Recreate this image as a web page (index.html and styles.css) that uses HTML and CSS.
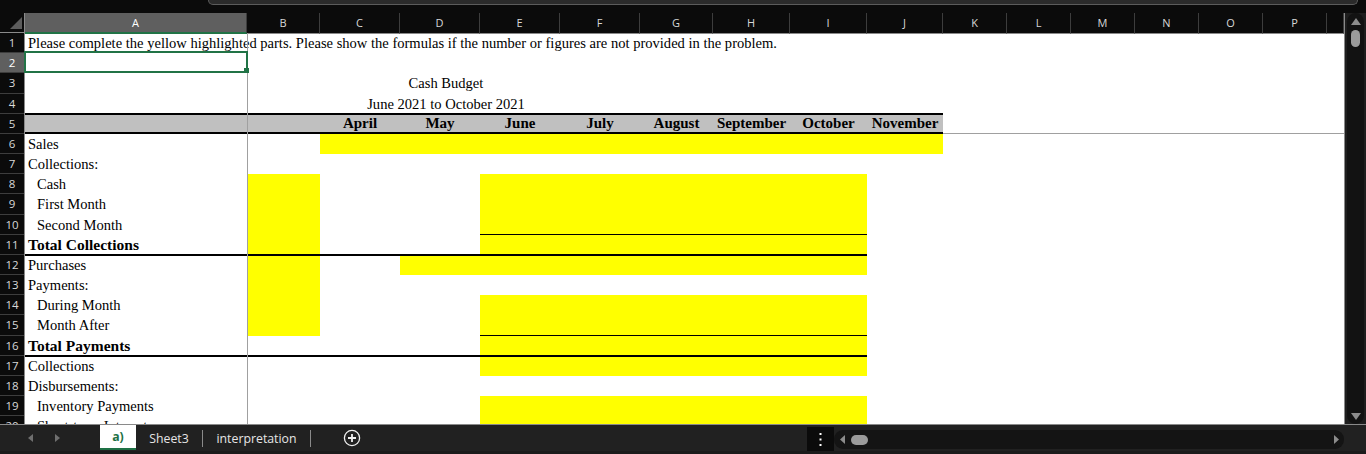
FILE: index.html
```html
<!DOCTYPE html>
<html lang="en">
<head>
  <meta charset="UTF-8" />
  <title>Cash Budget - a)</title>
  <link rel="stylesheet" href="styles.css">
</head>
<body>

  <!-- formula bar edge -->
  <div class="topbar"><div class="formula-edge"></div></div>

  <div class="workarea">
    <div class="sheet">

      <!-- select all corner -->
      <div class="corner">
        <svg width="24" height="19" viewBox="0 0 24 19"><polygon points="22,4 22,16 10,16" fill="#5c5c5c"/></svg>
      </div>

      <!-- column headers -->
      <div class="colheads">
        <span class="on">A</span><span>B</span><span>C</span><span>D</span><span>E</span>
        <span>F</span><span>G</span><span>H</span><span>I</span><span>J</span>
        <span>K</span><span>L</span><span>M</span><span>N</span><span>O</span>
        <span>P</span><span></span>
      </div>

      <!-- row headers -->
      <div class="rowheads">
        <span>1</span><span class="on">2</span><span>3</span><span>4</span><span>5</span>
        <span>6</span><span>7</span><span>8</span><span>9</span><span>10</span>
        <span>11</span><span>12</span><span>13</span><span>14</span><span>15</span>
        <span>16</span><span>17</span><span>18</span><span>19</span><span>20</span>
      </div>

      <!-- cells -->
      <div class="cells">
        <div class="txt note">Please complete the yellow highlighted parts. Please show the formulas if the number or figures are not provided in the problem.</div>
        <div class="sel"></div>

        <div class="txt title r3">Cash Budget</div>
        <div class="txt title r4">June 2021 to October 2021</div>

        <div class="txt band">
          <span></span><span>April</span><span>May</span><span>June</span><span>July</span>
          <span>August</span><span>September</span><span>October</span><span>November</span>
        </div>
        <div class="freeze-h"></div>

        <!-- yellow input areas -->
        <div class="fill fill-sales"></div>
        <div class="fill fill-b"></div>
        <div class="fill fill-coll"></div>
        <div class="fill fill-purch"></div>
        <div class="fill fill-pay"></div>
        <div class="fill fill-inv"></div>

        <!-- total lines -->
        <div class="rule part r10"></div>
        <div class="rule thick r11"></div>
        <div class="rule part r15"></div>
        <div class="rule thick r16"></div>

        <!-- labels -->
        <div class="txt lbl r6">Sales</div>
        <div class="txt lbl r7">Collections:</div>
        <div class="txt lbl ind r8">Cash</div>
        <div class="txt lbl ind r9">First Month</div>
        <div class="txt lbl ind r10">Second Month</div>
        <div class="txt lbl bold r11">Total Collections</div>
        <div class="txt lbl r12">Purchases</div>
        <div class="txt lbl r13">Payments:</div>
        <div class="txt lbl ind r14">During Month</div>
        <div class="txt lbl ind r15">Month After</div>
        <div class="txt lbl bold r16">Total Payments</div>
        <div class="txt lbl r17">Collections</div>
        <div class="txt lbl r18">Disbursements:</div>
        <div class="txt lbl ind r19">Inventory Payments</div>
        <div class="txt lbl ind r20">Short-term Interest</div>

        <div class="freeze-v"></div>
      </div>
    </div>

    <!-- vertical scrollbar -->
    <div class="vscroll">
      <div class="vtrack">
        <svg width="10" height="7" viewBox="0 0 10 7"><polygon points="5,0 10,7 0,7" fill="#8c8c8c"/></svg>
        <div class="vthumb"></div>
        <svg class="down" width="10" height="7" viewBox="0 0 10 7"><polygon points="0,0 10,0 5,7" fill="#8c8c8c"/></svg>
      </div>
    </div>
  </div>

  <!-- sheet tabs -->
  <div class="tabbar">
    <div class="nav">
      <svg width="5" height="8" viewBox="0 0 5 8"><polygon points="5,0 5,8 0,4" fill="#6f6f6f"/></svg>
      <svg width="5" height="8" viewBox="0 0 5 8"><polygon points="0,0 0,8 5,4" fill="#6f6f6f"/></svg>
    </div>
    <div class="tab active">a)</div>
    <div class="tab sheet3">Sheet3</div>
    <div class="divider"></div>
    <div class="tab interp">interpretation</div>
    <div class="divider"></div>
    <div class="addsheet">
      <svg width="18" height="18" viewBox="0 0 18 18">
        <circle cx="9" cy="9" r="7.6" fill="none" stroke="#f0f0f0" stroke-width="1.3"/>
        <path d="M9 5v8M5 9h8" stroke="#f0f0f0" stroke-width="1.8"/>
      </svg>
    </div>
    <div class="spacer"></div>
    <div class="more">
      <svg width="3" height="13" viewBox="0 0 3 13"><rect x="0.5" y="0" width="2" height="2" fill="#fff"/><rect x="0.5" y="5.5" width="2" height="2" fill="#fff"/><rect x="0.5" y="11" width="2" height="2" fill="#fff"/></svg>
    </div>
    <div class="hscroll">
      <div class="htrack">
        <svg width="5" height="9" viewBox="0 0 5 9"><polygon points="5,0 5,9 0,4.5" fill="#8c8c8c"/></svg>
        <div class="hthumb"></div>
        <svg class="right" width="5" height="9" viewBox="0 0 5 9"><polygon points="0,0 0,9 5,4.5" fill="#8c8c8c"/></svg>
      </div>
    </div>
    <div class="corner-br"></div>
  </div>

</body>
</html>
```

FILE: styles.css
```css
* {
  margin: 0; padding: 0;
  box-sizing: border-box;
}
body {
  background-color: #1e1e1e;
  width: 1366px;
  height: 454px;
  overflow: hidden;
  font-family: "Open Sans", "Noto Sans", sans-serif;
}

/* top strip */
.topbar {
  height: 13px;
  background-color: #0b0b0b;
}
.formula-edge {
  margin-left: 208px;
  width: 1150px;
  height: 5px;
  background-color: #2b2b2b;
  border: 1px solid #5c5c5c;
  border-top: none;
  border-radius: 0 0 6px 6px;
}

.workarea {
  display: flex;
  height: 411px;
}
.sheet {
  width: 1345px;
  display: grid;
  grid-template-columns: 25px 1fr;
  grid-template-rows: 20px 1fr;
  overflow: hidden;
  background-color: #fff;
  border-right: 1px solid #8a8a8a;
}
.corner {
  background-color: #0b0b0b;
  border-right: 1px solid #8a8a8a;
  border-bottom: 1px solid #8a8a8a;
}
.corner svg { display: block; }

/* headers */
.colheads, .cells {
  display: grid;
  grid-template-columns: 222px 73px 80px 80px 80px 80px 73px 77px 77px 76px 64px 64px 64px 64px 64px 64px 1fr;
}
.colheads {
  background-color: #0b0b0b;
}
.colheads span {
  color: #d8d8d8;
  font-size: 11px;
  text-align: center;
  line-height: 19px;
  border-right: 1px solid #3d3d3d;
  border-bottom: 1px solid #8a8a8a;
}
.colheads .on {
  background-color: #5f5f5f;
  color: #fff;
  border-bottom: 2px solid #217346;
}
.rowheads, .cells {
  grid-template-rows: 20px 20px 21px 20px 20px 20px 20px 20px 21px 20px 20px 20px 20px 20px 21px 20px 20px 20px 20px 20px;
}
.rowheads {
  display: grid;
  background-color: #0b0b0b;
  border-right: 1px solid #8a8a8a;
}
.rowheads span {
  color: #d8d8d8;
  font-size: 11.5px;
  text-align: center;
  line-height: 19px;
  border-bottom: 1px solid #3d3d3d;
}
.rowheads .on {
  background-color: #5f5f5f;
  color: #fff;
}

/* cells */
.txt {
  font-family: "Liberation Serif", "Times New Roman", serif;
  font-size: 14.55px;
  line-height: 20px;
  color: #000;
  white-space: nowrap;
}
.note {
  grid-column: 1 / -1;
  grid-row: 1;
  padding-left: 3px;
}
.sel {
  grid-column: 1 / 2;
  grid-row: 2;
  margin: -2px -1px 0 -1px;
  border: 2px solid #217346;
  position: relative;
  z-index: 3;
}
.sel::after {
  content: "";
  position: absolute;
  right: -3px;
  bottom: -2px;
  width: 5px;
  height: 5px;
  background-color: #217346;
}
.title {
  grid-column: 2 / 7;
  text-align: center;
  padding-left: 5px;
}
.band {
  grid-column: 1 / 11;
  grid-row: 5;
  margin-top: -1px;
  display: grid;
  grid-template-columns: 295px 80px 80px 80px 80px 73px 77px 77px 76px;
  background-color: #c0c0c0;
  border-top: 2px solid #000;
  border-bottom: 2px solid #000;
  font-size: 15px;
  font-weight: bold;
  line-height: 17px;
}
.band span { text-align: center; }
.freeze-h {
  grid-column: 11 / -1;
  grid-row: 5;
  border-bottom: 1px solid #a0a0a0;
}
.freeze-v {
  grid-column: 2 / 3;
  grid-row: 1 / -1;
  border-left: 1px solid #a0a0a0;
  z-index: 2;
}

.fill { background-color: #ffff00; }
.fill-sales { grid-column: 3 / 11; grid-row: 6; }
.fill-b { grid-column: 2 / 3; grid-row: 8 / 16; }
.fill-coll { grid-column: 5 / 10; grid-row: 8 / 12; }
.fill-purch { grid-column: 4 / 10; grid-row: 12; }
.fill-pay { grid-column: 5 / 10; grid-row: 14 / 18; }
.fill-inv { grid-column: 5 / 10; grid-row: 19 / 21; }

.rule {
  align-self: end;
  height: 0;
  border-bottom: 1px solid #000;
  z-index: 1;
}
.rule.part { grid-column: 5 / 10; }
.rule.thick {
  grid-column: 1 / 10;
  border-bottom-width: 2px;
  margin-bottom: -1px;
}

.lbl {
  grid-column: 1 / 2;
  padding-left: 3px;
}
.lbl.ind { padding-left: 12px; }
.lbl.bold {
  font-size: 15.5px;
  font-weight: bold;
}

.r3 { grid-row: 3; }
.r4 { grid-row: 4; }
.r6 { grid-row: 6; }
.r7 { grid-row: 7; }
.r8 { grid-row: 8; }
.r9 { grid-row: 9; }
.r10 { grid-row: 10; }
.r11 { grid-row: 11; }
.r12 { grid-row: 12; }
.r13 { grid-row: 13; }
.r14 { grid-row: 14; }
.r15 { grid-row: 15; }
.r16 { grid-row: 16; }
.r17 { grid-row: 17; }
.r18 { grid-row: 18; }
.r19 { grid-row: 19; }
.r20 { grid-row: 20; }

/* vertical scrollbar */
.vscroll {
  width: 21px;
  padding: 0 2px;
  background-color: #1e1e1e;
}
.vtrack {
  height: 100%;
  display: flex;
  flex-direction: column;
  align-items: center;
  padding: 5px 0 4px;
  background-color: #121212;
  border-radius: 9px;
}
.vthumb {
  width: 9px;
  height: 17px;
  margin-top: 5px;
  background-color: #9b9b9b;
  border-radius: 5px;
}
.vtrack .down { margin-top: auto; }

/* sheet tabs */
.tabbar {
  display: flex;
  height: 30px;
  background-color: #212121;
  border-top: 1px solid #8a8a8a;
  border-bottom: 3px solid #1b1b1b;
}
.nav {
  width: 100px;
  display: flex;
  align-items: center;
  gap: 22px;
  padding-left: 28px;
}
.tab {
  display: flex;
  align-items: center;
  justify-content: center;
  font-size: 12.3px;
  color: #e6e6e6;
}
.tab.active {
  width: 36px;
  height: 25px;
  background-color: #fff;
  color: #1e7145;
  font-weight: bold;
  border-bottom: 2px solid #1e7145;
}
.sheet3 { width: 66px; }
.interp { width: 107px; }
.divider {
  width: 1px;
  margin: 5px 0 4px;
  background-color: #8a8a8a;
}
.addsheet {
  width: 82px;
  display: flex;
  align-items: center;
  justify-content: center;
}
.spacer { flex: 1; }
.more {
  width: 27px;
  margin-top: 2px;
  display: flex;
  align-items: center;
  justify-content: center;
  background-color: #0b0b0b;
}
.hscroll {
  width: 510px;
  padding: 5px 0 2px;
}
.htrack {
  height: 100%;
  display: flex;
  align-items: center;
  padding: 0 5px 0 6px;
  background-color: #141414;
  border-radius: 9px;
}
.hthumb {
  width: 17px;
  height: 10px;
  margin-left: 6px;
  background-color: #9b9b9b;
  border-radius: 5px;
}
.htrack .right { margin-left: auto; }
.corner-br { width: 22px; }
```
